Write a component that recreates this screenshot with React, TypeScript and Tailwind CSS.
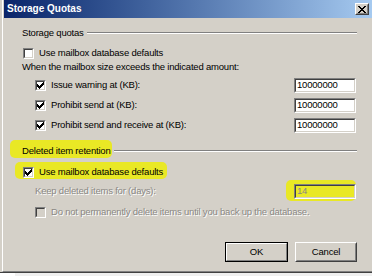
import React from "react";

const CHECK_PATH =
  "M6 0h1v1h-1z M5 1h2v1h-2z M0 2h1v1h-1z M4 2h3v1h-3z M0 3h2v1h-2z M3 3h3v1h-3z M0 4h5v1h-5z M1 5h3v1h-3z M2 6h1v1h-1z";

function Check({ checked = false, disabled = false }: { checked?: boolean; disabled?: boolean }) {
  return (
    <div className="w-[11px] h-[11px] shrink-0 border border-[#808080] border-r-white border-b-white">
      <div
        className={`w-full h-full border border-[#404040] border-r-[#d4d0c8] border-b-[#d4d0c8] flex items-center justify-center ${
          disabled ? "bg-[#d4d0c8]" : "bg-white"
        }`}
      >
        {checked && (
          <svg width="7" height="7" viewBox="0 0 7 7" shapeRendering="crispEdges">
            <path d={CHECK_PATH} fill="#000" />
          </svg>
        )}
      </div>
    </div>
  );
}

function TextBox({ value, disabled = false }: { value: string; disabled?: boolean }) {
  return (
    <div className="w-[62px] h-[15px] border border-[#808080] border-r-white border-b-white">
      <div
        className={`w-full h-full border border-[#404040] border-r-[#d4d0c8] border-b-[#d4d0c8] flex items-center pl-[1px] leading-none ${
          disabled ? "bg-transparent text-[#8a8884]" : "bg-white text-black"
        }`}
      >
        {value}
      </div>
    </div>
  );
}

function Header({ label }: { label: string }) {
  return (
    <div className="flex items-center h-[14px]">
      <span className="leading-none whitespace-nowrap">{label}</span>
      <div className="flex-1 ml-[3px] border-t border-t-[#808080] border-b border-b-white h-[2px]" />
    </div>
  );
}

export default function App() {
  return (
    <div className="w-[372px] h-[276px] bg-white overflow-hidden font-['Liberation_Sans',Arial,sans-serif] text-[9.5px] tracking-[-0.2px] text-black">
      <div className="h-[273px] bg-[#d4d0c8] pl-[2px] border-b border-b-[#404040]">
        <div className="h-full border-l border-l-white border-b border-b-[#808080] flex flex-col">
          {/* Title bar */}
          <div className="ml-[1px] h-[18px] bg-linear-to-r from-[#0a246a] to-[#a6caf0] flex items-center pl-[3px] pr-[3px]">
            <span className="text-white font-bold text-[10px] tracking-normal leading-none">Storage Quotas</span>
            <div className="ml-auto w-[14px] h-[12px] bg-[#d4d0c8] border border-white border-r-[#404040] border-b-[#404040]">
              <div className="w-full h-full border border-transparent border-r-[#808080] border-b-[#808080] flex items-center justify-center">
                <svg width="8" height="7" viewBox="0 0 8 7" shapeRendering="crispEdges">
                  <path
                    d="M0 0h2v1h-2z M6 0h2v1h-2z M1 1h2v1h-2z M5 1h2v1h-2z M2 2h4v1h-4z M3 3h2v1h-2z M2 4h4v1h-4z M1 5h2v1h-2z M5 5h2v1h-2z M0 6h2v1h-2z M6 6h2v1h-2z"
                    fill="#000"
                  />
                </svg>
              </div>
            </div>
          </div>

          {/* Body */}
          <div className="flex flex-col pt-[8px] pl-[19px] pr-[15px]">
            <Header label="Storage quotas" />

            <div className="mt-[6px] h-[14px] flex items-center pl-[1px] gap-[5px]">
              <Check />
              <span className="leading-none">Use mailbox database defaults</span>
            </div>

            <div className="h-[14px] flex items-center">
              <span className="leading-none">When the mailbox size exceeds the indicated amount:</span>
            </div>

            {[
              { label: "Issue warning at (KB):", mt: "mt-[3px]" },
              { label: "Prohibit send at (KB):", mt: "mt-[4px]" },
              { label: "Prohibit send and receive at (KB):", mt: "mt-[4px]" },
            ].map((r) => (
              <div key={r.label} className={`${r.mt} h-[16px] flex items-center pl-[13px]`}>
                <Check checked />
                <span className="ml-[5px] leading-none">{r.label}</span>
                <div className="ml-auto mr-[1px]">
                  <TextBox value="10000000" />
                </div>
              </div>
            ))}

            {/* Deleted item retention header with highlight */}
            <div className="mt-[11px] relative">
              <div className="absolute left-[-12px] top-[-4px] w-[102px] h-[18px] bg-[#e9e825] rounded-[5px]" />
              <div className="relative">
                <Header label="Deleted item retention" />
              </div>
            </div>

            <div className="mt-[7px] relative h-[14px]">
              <div className="absolute left-[-7px] top-[-3px] w-[152px] h-[17px] bg-[#e9e825] rounded-[5px]" />
              <div className="relative h-[14px] flex items-center pl-[1px] gap-[5px]">
                <Check checked />
                <span className="leading-none">Use mailbox database defaults</span>
              </div>
            </div>

            <div className="mt-[4px] h-[16px] flex items-center pl-[13px]">
              <span className="leading-none text-[#8a8884] [text-shadow:1px_1px_0_#ffffff]">
                Keep deleted items for (days):
              </span>
              <div className="ml-auto mr-[1px] relative">
                <div className="absolute left-[-8px] top-[-4px] w-[70px] h-[21px] bg-[#e9e825] rounded-[5px]" />
                <div className="relative">
                  <TextBox value="14" disabled />
                </div>
              </div>
            </div>

            <div className="mt-[6px] h-[14px] flex items-center pl-[13px]">
              <Check disabled />
              <span className="ml-[5px] leading-none text-[#8a8884] [text-shadow:1px_1px_0_#ffffff]">
                Do not permanently delete items until you back up the database.
              </span>
            </div>

            {/* Buttons */}
            <div className="mt-[23px] flex justify-end gap-[7px]">
              <div className="w-[63px] h-[20px] border border-black">
                <div className="w-full h-full border border-white border-r-[#808080] border-b-[#808080] flex items-center justify-center leading-none">
                  OK
                </div>
              </div>
              <div className="w-[62px] h-[20px] border border-white border-r-[#404040] border-b-[#404040]">
                <div className="w-full h-full border border-transparent border-r-[#808080] border-b-[#808080] flex items-center justify-center leading-none">
                  Cancel
                </div>
              </div>
            </div>
          </div>
        </div>
      </div>
      <div className="h-[3px] flex">
        <div className="w-[15px] bg-white" />
        <div className="flex-1 bg-[#efefef]" />
      </div>
    </div>
  );
}
